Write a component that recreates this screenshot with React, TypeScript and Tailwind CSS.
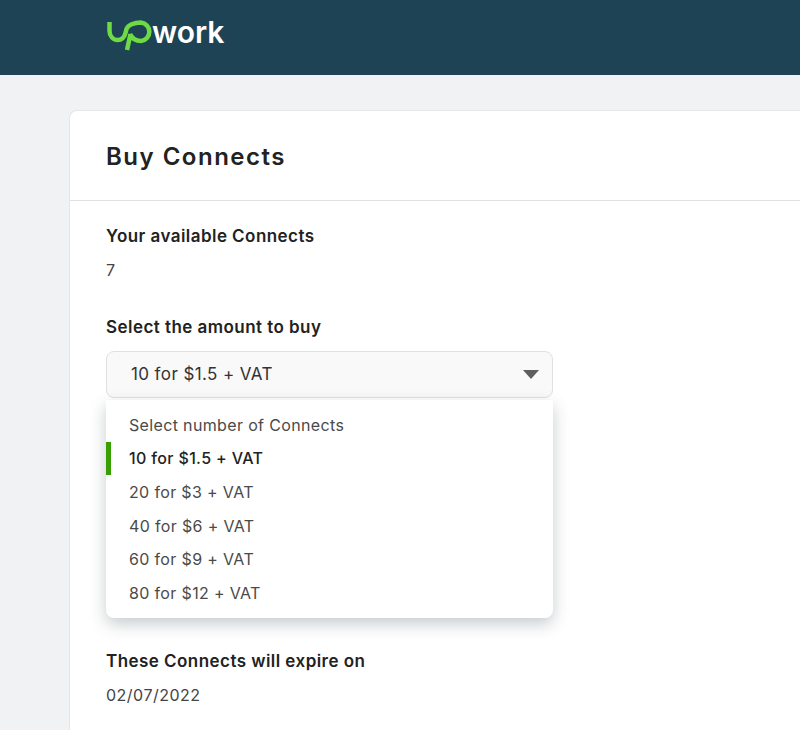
const options = [
  { label: 'Select number of Connects' },
  { label: '10 for $1.5 + VAT', active: true },
  { label: '20 for $3 + VAT' },
  { label: '40 for $6 + VAT' },
  { label: '60 for $9 + VAT' },
  { label: '80 for $12 + VAT' },
]

function Logo() {
  return (
    <div className="flex items-start">
      <svg width="46" height="34" viewBox="0 0 46 34" fill="none" className="shrink-0">
        <path
          d="M3.500 3v9c0 5 3.500 9 8 9 4.500 0 7-3 8-7l1-4C22 6 28 3.500 35 3.500a9.300 9.300 0 0 1 0 18.500c-5 0-9-2.500-11-7M24.500 15l-3.500 16"
          stroke="#6fda44"
          strokeWidth="4.500"
        />
      </svg>
      <span className="text-[30px] leading-[34px] font-semibold text-white -mt-[4px]">work</span>
    </div>
  )
}

export default function App() {
  return (
    <div className="h-[730px] overflow-hidden bg-[#f1f2f4] font-['Inter','Open_Sans',sans-serif]">
      {/* Header */}
      <header className="h-[75px] bg-[#1d4354] pl-[106px] pt-[19px]">
        <Logo />
      </header>

      {/* Card */}
      <main className="mt-[35px] ml-[69px] h-[700px] bg-white border border-[#e4e6e8] border-r-0 rounded-tl-lg">
        <div className="h-[90px] flex items-center px-[36px] border-b border-[#e0e0e0]">
          <h1 className="text-[24px] font-semibold text-[#222] tracking-[1.5px] pt-[2px]">Buy Connects</h1>
        </div>

        <div className="pl-[36px] pt-[24px] text-[#222]">
          <div className="text-[17px] leading-[22px] font-semibold tracking-[0.45px]">Your available Connects</div>
          <div className="mt-[12px] text-[16px] leading-[22px] text-[#444]">7</div>

          <div className="mt-[35px] text-[17px] leading-[22px] font-semibold tracking-[0.45px]">Select the amount to buy</div>

          <div className="relative mt-[13px] w-[447px]">
            <div className="h-[47px] flex items-center justify-between pl-[24px] pr-[13px] bg-[#f9f9f9] border border-[#e0e0e0] rounded-lg">
              <span className="text-[17px] text-[#333] tracking-[0.4px] pt-px">10 for $1.5 + VAT</span>
              <svg width="16" height="9" viewBox="0 0 16 9">
                <path d="M0 0h16l-8 9z" fill="#5e5e5e" />
              </svg>
            </div>

            {/* Dropdown */}
            <ul className="absolute left-0 top-[49px] w-full h-[218px] py-[8px] bg-white rounded-b-lg shadow-[0_6px_16px_rgba(30,50,60,0.25)]">
              {options.map(({ label, active }) => (
                <li
                  key={label}
                  className={`h-[33.6px] flex items-center pl-[23px] text-[16px] tracking-[0.35px] border-l-[5px] ${
                    active ? 'border-[#37a000] text-[#222] font-medium' : 'border-transparent text-[#4a4a4a]'
                  }`}
                >
                  <span className="-ml-[5px]">{label}</span>
                </li>
              ))}
            </ul>
          </div>

          <div className="mt-[252px] text-[17px] leading-[22px] font-semibold tracking-[0.45px]">These Connects will expire on</div>
          <div className="mt-[12px] text-[16px] leading-[22px] tracking-[0.5px] text-[#444]">02/07/2022</div>
        </div>
      </main>
    </div>
  )
}
